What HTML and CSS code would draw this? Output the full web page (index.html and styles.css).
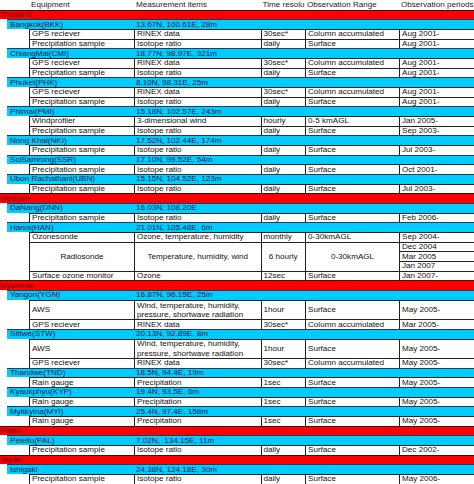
FILE: index.html
```html
<!DOCTYPE html>
<html>
<head>
<meta charset="utf-8">
<link rel="stylesheet" href="styles.css">
</head>
<body>
<div class="sheet">
  <div class="h hi"></div><div class="h">Equipment</div><div class="h">Measurement items</div><div class="h">Time resolu</div><div class="h">Observation Range</div><div class="h">Observation periods</div>

  <div class="country">Thailand</div>
  <div class="i1"></div><div class="stn">Bangkok(BKK)</div><div class="crd">13.67N, 100.61E, 28m</div>
  <div class="i2"></div><div class="c">GPS reciever</div><div class="c">RINEX data</div><div class="c">30sec*</div><div class="c">Column accumulated</div><div class="c">Aug 2001-</div>
  <div class="i2"></div><div class="c">Precipitation sample</div><div class="c">Isotope ratio</div><div class="c">daily</div><div class="c">Surface</div><div class="c">Aug 2001-</div>
  <div class="i1"></div><div class="stn">ChiangMai(CMI)</div><div class="crd">18.77N, 98.97E, 321m</div>
  <div class="i2"></div><div class="c">GPS reciever</div><div class="c">RINEX data</div><div class="c">30sec*</div><div class="c">Column accumulated</div><div class="c">Aug 2001-</div>
  <div class="i2"></div><div class="c">Precipitation sample</div><div class="c">Isotope ratio</div><div class="c">daily</div><div class="c">Surface</div><div class="c">Aug 2001-</div>
  <div class="i1"></div><div class="stn">Phuket(PHK)</div><div class="crd">8.10N, 98.31E, 25m</div>
  <div class="i2"></div><div class="c">GPS reciever</div><div class="c">RINEX data</div><div class="c">30sec*</div><div class="c">Column accumulated</div><div class="c">Aug 2001-</div>
  <div class="i2"></div><div class="c">Precipitation sample</div><div class="c">Isotope ratio</div><div class="c">daily</div><div class="c">Surface</div><div class="c">Aug 2001-</div>
  <div class="i1"></div><div class="stn">Phimai(PMI)</div><div class="crd">15.18N, 102.57E, 243m</div>
  <div class="i2"></div><div class="c">Windprofiler</div><div class="c">3-dimensional wind</div><div class="c">hourly</div><div class="c">0-5 kmAGL</div><div class="c">Jan 2005-</div>
  <div class="i2"></div><div class="c">Precipitation sample</div><div class="c">Isotope ratio</div><div class="c">daily</div><div class="c">Surface</div><div class="c">Sep 2003-</div>
  <div class="i1"></div><div class="stn">Nong Khai(NKI)</div><div class="crd">17.52N, 102.44E, 174m</div>
  <div class="i2"></div><div class="c">Precipitation sample</div><div class="c">Isotope ratio</div><div class="c">daily</div><div class="c">Surface</div><div class="c">Jul 2003-</div>
  <div class="i1"></div><div class="stn">SciSamrong(SSR)</div><div class="crd">17.10N, 99.52E, 54m</div>
  <div class="i2"></div><div class="c">Precipitation sample</div><div class="c">Isotope ratio</div><div class="c">daily</div><div class="c">Surface</div><div class="c">Oct 2001-</div>
  <div class="i1"></div><div class="stn">Ubon Rachathani(UBN)</div><div class="crd">15.15N, 104.52E, 123m</div>
  <div class="i2"></div><div class="c">Precipitation sample</div><div class="c">Isotope ratio</div><div class="c">daily</div><div class="c">Surface</div><div class="c">Jul 2003-</div>

  <div class="country">Vietnam</div>
  <div class="i1"></div><div class="stn">DaNang(DNN)</div><div class="crd">16.03N, 108.20E</div>
  <div class="i2"></div><div class="c">Precipitation sample</div><div class="c">Isotope ratio</div><div class="c">daily</div><div class="c">Surface</div><div class="c">Feb 2006-</div>
  <div class="i1"></div><div class="stn">Hanoi(HAN)</div><div class="crd">21.01N, 105.48E, 6m</div>
  <div class="i2"></div><div class="c">Ozonesonde</div><div class="c">Ozone, temperature, humidity</div><div class="c">monthly</div><div class="c">0-30kmAGL</div><div class="c">Sep 2004-</div>
  <div class="i2 r3"></div><div class="c r3 ctr">Radiosonde</div><div class="c r3 ctr">Temperature, humidity, wind</div><div class="c r3 ctr">6 hourly</div><div class="c r3 ctr">0-30kmAGL</div><div class="c">Dec 2004</div>
  <div class="c">Mar 2005</div>
  <div class="c">Jan 2007</div>
  <div class="i2"></div><div class="c">Surface ozone monitor</div><div class="c">Ozone</div><div class="c">12sec</div><div class="c">Surface</div><div class="c">Jan 2007-</div>

  <div class="country">Myanmar</div>
  <div class="i1"></div><div class="stn">Yangon(YGN)</div><div class="crd">16.87N, 96.15E, 25m</div>
  <div class="i2 r2"></div><div class="c r2">AWS</div><div class="c r2 two">Wind, temperature, humidity,<br>pressure, shortwave radiation</div><div class="c r2">1hour</div><div class="c r2">Surface</div><div class="c r2">May 2005-</div>
  <div class="i2"></div><div class="c">GPS reciever</div><div class="c">RINEX data</div><div class="c">30sec*</div><div class="c">Column accumulated</div><div class="c">Mar 2005-</div>
  <div class="i1"></div><div class="stn">Sittwe(STW)</div><div class="crd">20.13N, 92.89E, 8m</div>
  <div class="i2 r2"></div><div class="c r2">AWS</div><div class="c r2 two">Wind, temperature, humidity,<br>pressure, shortwave radiation</div><div class="c r2">1hour</div><div class="c r2">Surface</div><div class="c r2">May 2005-</div>
  <div class="i2"></div><div class="c">GPS reciever</div><div class="c">RINEX data</div><div class="c">30sec*</div><div class="c">Column accumulated</div><div class="c">May 2005-</div>
  <div class="i1"></div><div class="stn">Thandwe(TND)</div><div class="crd">18.5N, 94.4E, 19m</div>
  <div class="i2"></div><div class="c">Rain gauge</div><div class="c">Precipitation</div><div class="c">1sec</div><div class="c">Surface</div><div class="c">May 2005-</div>
  <div class="i1"></div><div class="stn">Kyaukphyu(KYP)</div><div class="crd">19.4N, 93.5E, 6m</div>
  <div class="i2"></div><div class="c">Rain gauge</div><div class="c">Precipitation</div><div class="c">1sec</div><div class="c">Surface</div><div class="c">May 2005-</div>
  <div class="i1"></div><div class="stn">Myitkyina(MYI)</div><div class="crd">25.4N, 97.4E, 158m</div>
  <div class="i2"></div><div class="c">Rain gauge</div><div class="c">Precipitation</div><div class="c">1sec</div><div class="c">Surface</div><div class="c">May 2005-</div>

  <div class="country">Palau</div>
  <div class="i1"></div><div class="stn">Peleliu(PAL)</div><div class="crd">7.02N,&nbsp; 134.15E, 11m</div>
  <div class="i2"></div><div class="c">Precipitation sample</div><div class="c">Isotope ratio</div><div class="c">daily</div><div class="c">Surface</div><div class="c">Dec 2002-</div>

  <div class="country">Japan</div>
  <div class="i1"></div><div class="stn">Ishigaki</div><div class="crd">24.38N, 124.18E, 30m</div>
  <div class="i2"></div><div class="c">Precipitation sample</div><div class="c">Isotope ratio</div><div class="c">daily</div><div class="c">Surface</div><div class="c">May 2006-</div>
</div>
</body>
</html>
```

FILE: styles.css
```css
html, body {
  margin: 0;
  padding: 0;
  background: #fff;
}

.sheet {
  display: grid;
  grid-template-columns: 7px 22px 105px 126.5px 44.5px 94px 1fr;
  grid-auto-rows: 9.68px;
  width: 474px;
  height: 484px;
  overflow: hidden;
  font-family: "Liberation Sans", Arial, sans-serif;
  font-size: 8.1px;
  line-height: 8px;
  color: #111;
}

.sheet > div {
  box-sizing: border-box;
  display: flex;
  align-items: center;
  white-space: nowrap;
  overflow: hidden;
}

.h {
  padding-left: 2px;
  color: #222;
}

.hi {
  grid-column: span 2;
}

.country {
  grid-column: 1 / -1;
  background: #ff0000;
  border-top: 1px solid #4a0000;
  color: #6a0000;
  padding-left: 0;
}

.i1 {
  grid-column: span 1;
}

.stn {
  grid-column: span 2;
  background: #00ccff;
  border-top: 1px solid #1d3d50;
  color: #0b1a44;
  padding-left: 3px;
}

.crd {
  grid-column: span 4;
  background: #00ccff;
  border-top: 1px solid #1d3d50;
  color: #0b1a44;
  padding-left: 2px;
}

.i2 {
  grid-column: span 2;
}

.c {
  border-top: 1px solid #222;
  border-left: 1px solid #222;
  padding-left: 2px;
  background: #fff;
}

.r2 {
  grid-row: span 2;
}

.r3 {
  grid-row: span 3;
}

.ctr {
  justify-content: center;
  padding-left: 0;
}

.two {
  line-height: 9.5px;
}
```
